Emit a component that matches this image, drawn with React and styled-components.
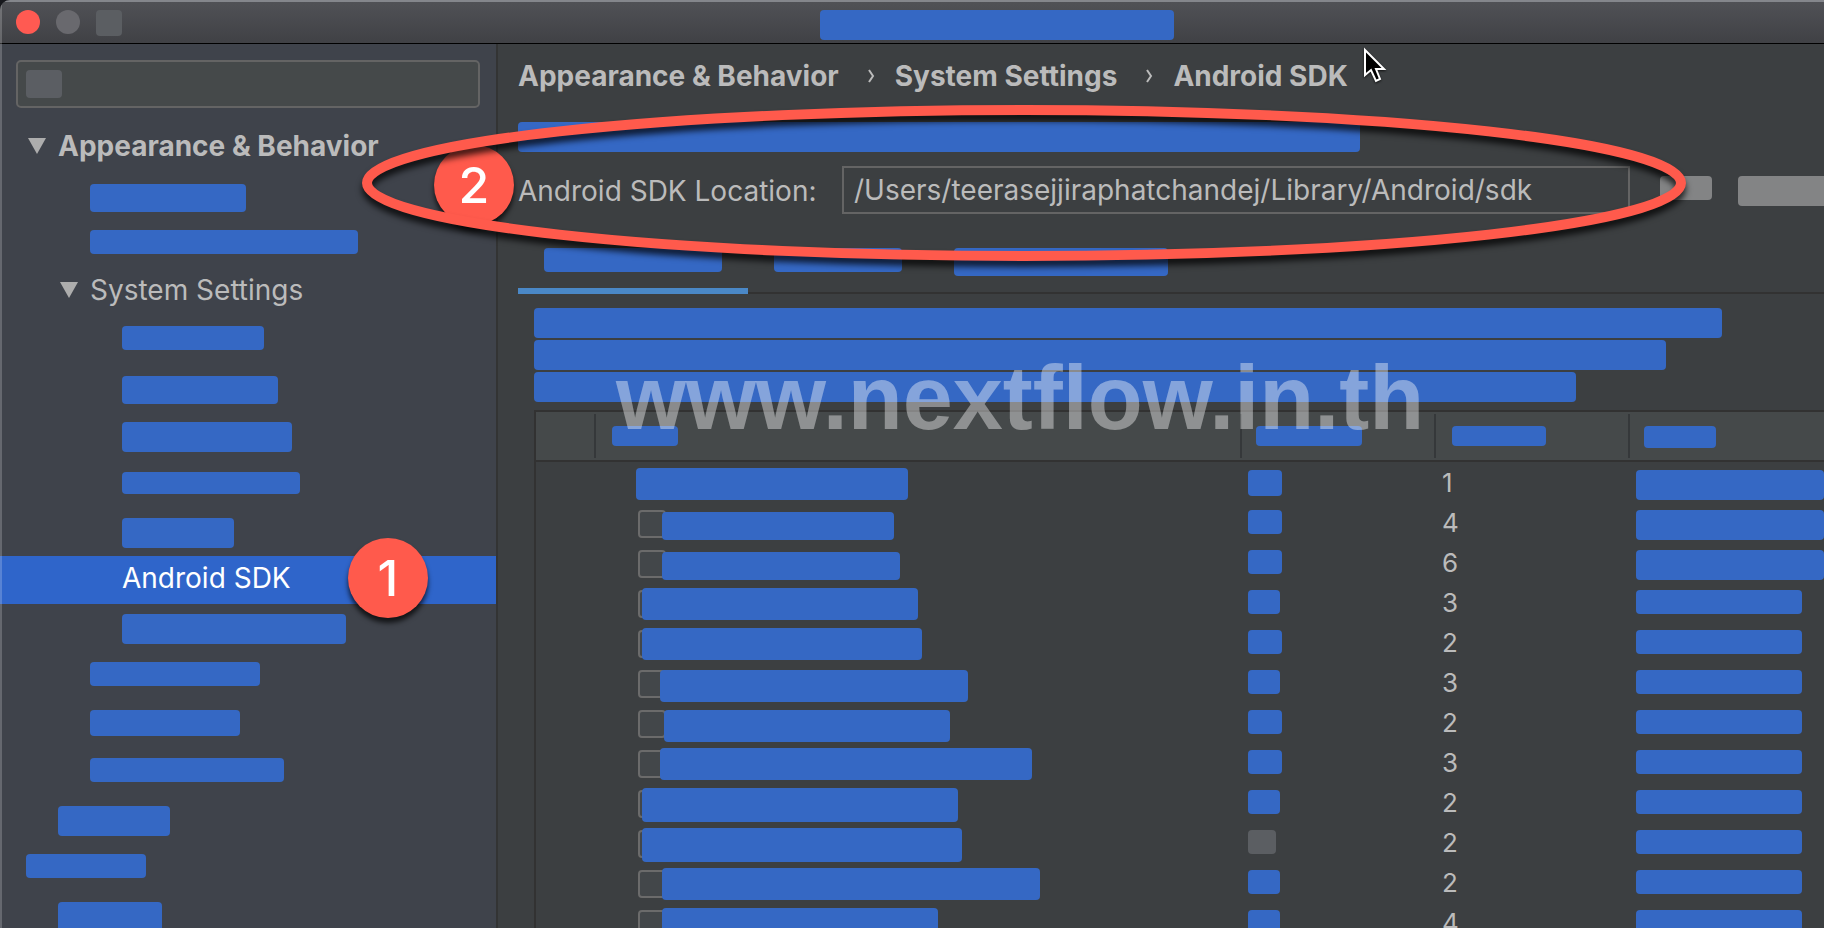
import React from "react";
import styled, { createGlobalStyle } from "styled-components";

const GlobalStyle = createGlobalStyle`
  * { box-sizing: border-box; }
  body {
    margin: 0;
    overflow: hidden;
    background: #17181d;
    color: #bbbbbb;
    font-family: Inter, "Liberation Sans", sans-serif;
    font-size: 28px;
    font-optical-sizing: none;
  }
  button, input { font: inherit; font-optical-sizing: inherit; color: inherit; }
`;

const Window = styled.div`
  position: relative;
  display: flex;
  flex-direction: column;
  height: 100vh;
  overflow: hidden;
  border-top-left-radius: 10px;
  background: #3c3f41;

  &::before {
    content: "";
    position: absolute;
    z-index: 1;
    inset: 0 auto 0 0;
    width: 2px;
    background: rgba(255, 255, 255, 0.2);
  }
`;

const TitleBar = styled.header`
  flex: none;
  display: flex;
  align-items: flex-start;
  gap: 16px;
  height: 44px;
  padding: 8px 16px 0;
  border-top: 2px solid #84868c;
  border-bottom: 1px solid #000000;
  background: linear-gradient(#505156, #404145);
`;

const Light = styled.button`
  width: 24px;
  height: 24px;
  padding: 0;
  border: 0;
  border-radius: 50%;
  background: ${(p) => p.$color};
`;

const Bar = styled.span`
  flex: none;
  display: block;
  width: ${(p) => p.$w}px;
  max-width: 100%;
  height: ${(p) => p.$h}px;
  border-radius: 4px;
  background: ${(p) => p.$color || "#3568c4"};
`;

const TitleSlot = styled.div`
  flex: 1;
  padding-left: 682px;
`;

const Body = styled.div`
  flex: 1;
  min-height: 0;
  display: flex;
`;

const Sidebar = styled.aside`
  flex: none;
  width: 498px;
  overflow: hidden;
  padding-top: 16px;
  border-right: 2px solid #333434;
  background: #3f434b;
`;

const Search = styled.label`
  display: flex;
  align-items: center;
  height: 48px;
  margin: 0 16px 16px;
  padding: 0 8px;
  border: 2px solid #646464;
  border-radius: 5px;
  background: #45494a;

  input {
    flex: 1;
    min-width: 0;
    border: 0;
    outline: 0;
    background: transparent;
  }
`;

const Tree = styled.ul`
  margin: 0;
  padding: 0;
  list-style: none;
`;

const BarItem = styled.li`
  height: 48px;
  padding-top: ${(p) => p.$top}px;
  padding-left: ${(p) => p.$indent}px;
`;

const TextItem = styled.li`
  display: flex;
  align-items: center;
  height: 48px;
  padding-bottom: 4px;
  padding-left: ${(p) => p.$indent}px;
  font-weight: ${(p) => (p.$bold ? 700 : 400)};
  white-space: nowrap;
  color: ${(p) => (p.$selected ? "#ffffff" : "inherit")};
  background: ${(p) => (p.$selected ? "#2f65ca" : "transparent")};
`;

const Arrow = styled.svg`
  flex: none;
  width: 18px;
  height: 16px;
  margin-right: 12px;
  fill: #adadad;
`;

const Main = styled.main`
  flex: 1;
  min-width: 0;
  padding-left: 20px;
`;

const Breadcrumb = styled.nav`
  display: flex;
  align-items: center;
  height: 64px;
  margin-bottom: 14px;
  font-weight: 700;
  white-space: nowrap;

  a { color: inherit; text-decoration: none; }
`;

const Chevron = styled.svg`
  flex: none;
  width: 8px;
  height: 14px;
  margin: 0 20px 0 28px;
  fill: none;
  stroke: #bbbbbb;
  stroke-width: 2;
`;

const Location = styled.div`
  display: flex;
  height: 48px;
  margin: 14px 0 34px;

  label {
    flex: none;
    width: 324px;
    line-height: 50px;
    white-space: nowrap;
  }

  input {
    flex: 1;
    min-width: 0;
    height: 48px;
    margin-right: 30px;
    padding: 0 10px;
    border: 2px solid #646464;
    outline: 0;
    background: transparent;
  }
`;

const GreyButton = styled.button`
  flex: none;
  width: ${(p) => p.$w}px;
  height: ${(p) => p.$h}px;
  margin-top: 10px;
  padding: 0;
  border: 0;
  border-radius: ${(p) => (p.$cut ? "4px 0 0 4px" : "4px")};
  background: #838485;

  & + & { margin-left: 26px; }
`;

const Tabs = styled.div`
  display: flex;
  height: 46px;
  border-bottom: 2px solid #323232;
`;

const Tab = styled.button`
  display: flex;
  align-items: flex-start;
  height: 46px;
  padding: 0 26px;
  border: 0;
  border-bottom: 6px solid ${(p) => (p.$active ? "#4a88c7" : "transparent")};
  background: transparent;
`;

const Info = styled.div`
  display: grid;
  gap: 2px;
  padding: 14px 0 8px 16px;
`;

const TableFrame = styled.div`
  margin-left: 16px;
  border-top: 2px solid #323232;
  border-left: 2px solid #323232;
`;

const Table = styled.table`
  width: 100%;
  table-layout: fixed;
  border-collapse: collapse;

  col:nth-child(1) { width: 60px; }
  col:nth-child(3), col:nth-child(4) { width: 194px; }
  col:nth-child(5) { width: 194px; }

  thead { background: #45494a; }
  th { height: 48px; padding: 2px 0; vertical-align: top; }
  td { height: 40px; padding: 0; vertical-align: top; }
  tbody { border-top: 2px solid #323232; }
`;

const HeadCell = styled.div`
  height: 44px;
  padding: 12px 0 0 ${(p) => p.$start || 16}px;
  border-right: ${(p) => (p.$last ? 0 : 2)}px solid #35383a;
`;

const NameCell = styled.div`
  display: flex;
  height: 40px;
  padding-top: 8px;
  padding-left: ${(p) => (p.$parent ? 40 : 42)}px;
`;

const Check = styled.input`
  flex: none;
  appearance: none;
  width: 28px;
  height: 28px;
  margin: 0;
  border: 2px solid #6b6b6b;
  border-radius: 4px;
  background: #43474a;
`;

const NameBar = styled(Bar)`
  position: relative;
  margin-top: ${(p) => p.$drop}px;
  margin-left: -${(p) => p.$over}px;
`;

const MarkCell = styled.div`
  height: 40px;
  padding: 8px 0 0 6px;
`;

const Revision = styled.div`
  height: 40px;
  padding-left: 6px;
  font-size: 26px;
  line-height: 42px;
`;

const Overlay = styled.svg`
  position: absolute;
  z-index: 2;
  left: ${(p) => p.$x}px;
  top: ${(p) => p.$y}px;
  pointer-events: none;
  filter: drop-shadow(0 ${(p) => p.$drop}px ${(p) => p.$blur}px rgba(0, 0, 0, 0.75));
`;

const Badge = styled.div`
  position: absolute;
  z-index: 2;
  left: ${(p) => p.$x}px;
  top: ${(p) => p.$y}px;
  width: 80px;
  height: 80px;
  border-radius: 50%;
  background: #ff5a4c;
  box-shadow: 0 5px 5px rgba(0, 0, 0, 0.7);
  color: #ffffff;
  font-size: 50px;
  font-weight: 500;
  line-height: 80px;
  text-align: center;
`;

const Watermark = styled.div`
  position: absolute;
  z-index: 2;
  left: 616px;
  top: 353px;
  color: rgba(255, 255, 255, 0.4);
  font: bold 90px/90px "Liberation Sans", sans-serif;
  white-space: nowrap;
  pointer-events: none;
`;

const tree = [
  { text: "Appearance & Behavior", indent: 28, bold: true, open: true },
  { indent: 90, top: 12, w: 156, h: 28 },
  { indent: 90, top: 10, w: 268, h: 24 },
  { text: "System Settings", indent: 60, open: true },
  { indent: 122, top: 10, w: 142, h: 24 },
  { indent: 122, top: 12, w: 156, h: 28 },
  { indent: 122, top: 10, w: 170, h: 30 },
  { indent: 122, top: 12, w: 178, h: 22 },
  { indent: 122, top: 10, w: 112, h: 30 },
  { text: "Android SDK", indent: 122, selected: true },
  { indent: 122, top: 10, w: 224, h: 30 },
  { indent: 90, top: 10, w: 170, h: 24 },
  { indent: 90, top: 10, w: 150, h: 26 },
  { indent: 90, top: 10, w: 194, h: 24 },
  { indent: 58, top: 10, w: 112, h: 30 },
  { indent: 26, top: 10, w: 120, h: 24 },
  { indent: 58, top: 10, w: 104, h: 30 },
];

const rows = [
  { parent: true, drop: -2, over: 0, w: 272, h: 32, api: 34, apiH: 26, rev: 1, wide: true },
  { drop: 2, over: 4, w: 232, h: 28, api: 34, rev: 4, wide: true },
  { drop: 2, over: 4, w: 238, h: 28, api: 34, rev: 6, wide: true },
  { drop: -2, over: 24, w: 276, h: 32, api: 32, rev: 3 },
  { drop: -2, over: 24, w: 280, h: 32, api: 34, rev: 2 },
  { drop: 0, over: 6, w: 308, h: 32, api: 32, rev: 3 },
  { drop: 0, over: 2, w: 286, h: 32, api: 34, rev: 2 },
  { drop: -2, over: 6, w: 372, h: 32, api: 34, rev: 3 },
  { drop: -2, over: 24, w: 316, h: 34, api: 32, rev: 2 },
  { drop: -2, over: 24, w: 320, h: 34, api: 28, grey: true, rev: 2 },
  { drop: -2, over: 4, w: 378, h: 32, api: 32, rev: 2 },
  { drop: -2, over: 4, w: 276, h: 32, api: 32, rev: 4 },
];

function TreeItem({ item }) {
  if (!item.text) {
    return (
      <BarItem $indent={item.indent} $top={item.top}>
        <Bar $w={item.w} $h={item.h} />
      </BarItem>
    );
  }
  return (
    <TextItem $indent={item.indent} $bold={item.bold} $selected={item.selected}>
      {item.open && (
        <Arrow viewBox="0 0 18 16" aria-hidden="true">
          <path d="M0 0H18L9 16Z" />
        </Arrow>
      )}
      {item.text}
    </TextItem>
  );
}

function Separator() {
  return (
    <Chevron viewBox="0 0 8 14" aria-hidden="true">
      <path d="M2 1L6 7L2 13" />
    </Chevron>
  );
}

export default function App() {
  return (
    <>
      <GlobalStyle />
      <Window>
        <TitleBar>
          <Light $color="#ff5a52" aria-label="Close" />
          <Light $color="#69696e" aria-label="Minimize" />
          <Bar $w={26} $h={26} $color="#5b5e62" />
          <TitleSlot>
            <Bar $w={354} $h={30} />
          </TitleSlot>
        </TitleBar>
        <Body>
          <Sidebar>
            <Search>
              <Bar $w={36} $h={28} $color="#5b5e63" />
              <input type="text" aria-label="Search settings" />
            </Search>
            <Tree>
              {tree.map((item, i) => (
                <TreeItem key={i} item={item} />
              ))}
            </Tree>
          </Sidebar>
          <Main>
            <Breadcrumb>
              <a href="#appearance">Appearance &amp; Behavior</a>
              <Separator />
              <a href="#system">System Settings</a>
              <Separator />
              <a href="#sdk">Android SDK</a>
            </Breadcrumb>
            <Bar $w={842} $h={30} />
            <Location>
              <label htmlFor="sdk-path">Android SDK Location:</label>
              <input
                id="sdk-path"
                type="text"
                defaultValue="/Users/teerasejjiraphatchandej/Library/Android/sdk"
              />
              <GreyButton $w={52} $h={24} aria-label="Edit" />
              <GreyButton $w={86} $h={30} $cut aria-label="Optimize disk space" />
            </Location>
            <Tabs>
              <Tab $active aria-label="SDK Platforms"><Bar $w={178} $h={24} /></Tab>
              <Tab aria-label="SDK Tools"><Bar $w={128} $h={24} /></Tab>
              <Tab aria-label="SDK Update Sites"><Bar $w={214} $h={28} /></Tab>
            </Tabs>
            <Info>
              <Bar $w={1188} $h={30} />
              <Bar $w={1132} $h={30} />
              <Bar $w={1042} $h={30} />
            </Info>
            <TableFrame>
              <Table>
                <colgroup><col /><col /><col /><col /><col /></colgroup>
                <thead>
                  <tr>
                    <th><HeadCell /></th>
                    <th><HeadCell><Bar $w={66} $h={20} /></HeadCell></th>
                    <th><HeadCell $start={14}><Bar $w={106} $h={20} /></HeadCell></th>
                    <th><HeadCell><Bar $w={94} $h={20} /></HeadCell></th>
                    <th><HeadCell $start={14} $last><Bar $w={72} $h={22} /></HeadCell></th>
                  </tr>
                </thead>
                <tbody>
                  {rows.map((row, i) => (
                    <tr key={i}>
                      <td />
                      <td>
                        <NameCell $parent={row.parent}>
                          {!row.parent && <Check type="checkbox" aria-label={`Package ${i}`} />}
                          <NameBar $w={row.w} $h={row.h} $drop={row.drop} $over={row.over} />
                        </NameCell>
                      </td>
                      <td>
                        <MarkCell>
                          <Bar $w={row.api} $h={row.apiH || 24} $color={row.grey && "#5b5e62"} />
                        </MarkCell>
                      </td>
                      <td><Revision>{row.rev}</Revision></td>
                      <td>
                        <MarkCell>
                          <Bar $w={row.wide ? 240 : 166} $h={row.wide ? 30 : 24} />
                        </MarkCell>
                      </td>
                    </tr>
                  ))}
                </tbody>
              </Table>
            </TableFrame>
          </Main>
        </Body>
        <Badge $x={434} $y={145}>2</Badge>
        <Overlay $x={352} $y={94} $drop={6} $blur={3} width="1346" height="190" aria-hidden="true">
          <ellipse cx="672" cy="89" rx="657" ry="73" fill="none" stroke="#ff5a4c" strokeWidth="10" />
        </Overlay>
        <Badge $x={348} $y={538}>1</Badge>
        <Watermark>www.nextflow.in.th</Watermark>
        <Overlay $x={1362} $y={45} $drop={1} $blur={1} width="28" height="42" viewBox="0 0 28 42" aria-hidden="true">
          <path
            d="M3 5V30L9 25L14 36L18 34L14 24H22Z"
            fill="#000000"
            stroke="#ffffff"
            strokeWidth="2"
          />
        </Overlay>
      </Window>
    </>
  );
}
